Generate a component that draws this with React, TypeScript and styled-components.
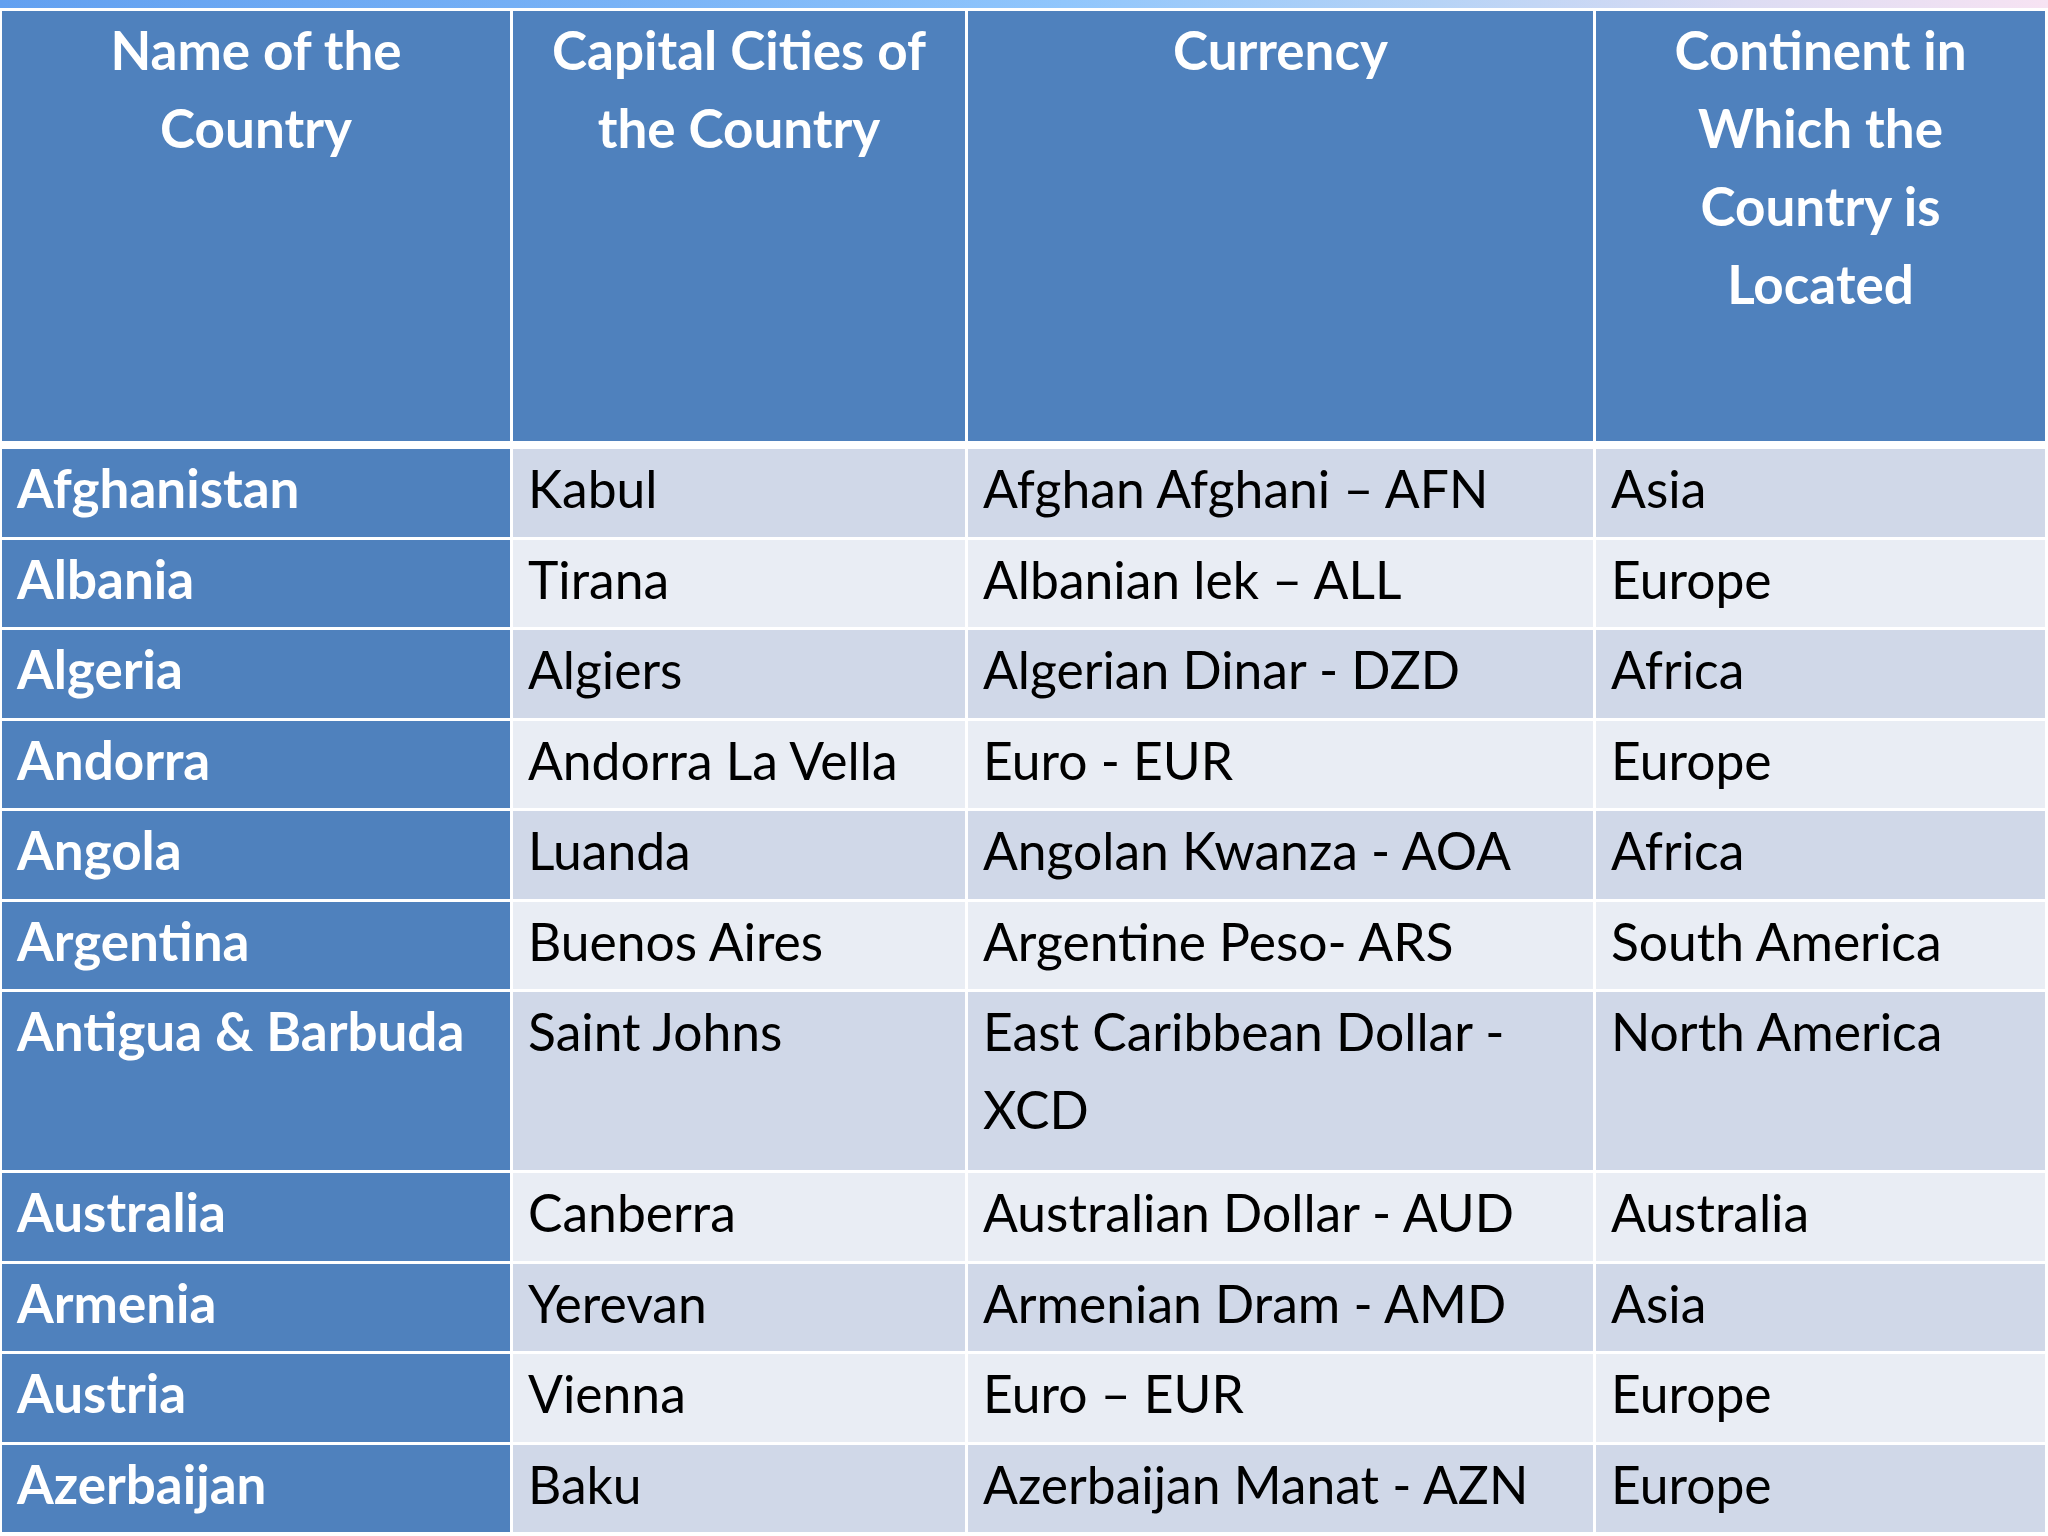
import React from "react";
import styled, { createGlobalStyle } from "styled-components";

const GlobalStyle = createGlobalStyle`
  html, body {
    margin: 0;
    padding: 0;
    background: #ffffff;
  }
  body {
    width: 2048px;
    height: 1536px;
    overflow: hidden;
    font-family: Lato, "Open Sans", "Liberation Sans", sans-serif;
  }
`;

const Page = styled.div`
  width: 2048px;
  height: 1536px;
  background: #ffffff;
  display: flex;
  flex-direction: column;
`;

const TopStripe = styled.div`
  height: 8px;
  flex: none;
  background: linear-gradient(
    90deg,
    #62a0f0 0%,
    #78b2f6 30%,
    #90c6fc 52%,
    #b6d3f6 70%,
    #dcdcf3 85%,
    #f7e3f3 100%
  );
`;

const Table = styled.div`
  display: grid;
  grid-template-columns: 508px 452px 625px 449px;
  column-gap: 3px;
  row-gap: 3px;
  margin: 3px 3px 0 2px;
`;

const HeaderCell = styled.div`
  height: 430px;
  margin-bottom: 5px;
  background: #4f81bd;
  color: #ffffff;
  font-weight: 700;
  font-size: 53px;
  line-height: 78px;
  text-align: center;
  padding: 0 8px;
  box-sizing: border-box;
`;

const BodyCell = styled.div<{ $shade: "dark" | "light"; $lines: number }>`
  height: ${(p) => p.$lines * 87.5 + (p.$lines - 1) * 3}px;
  background: ${(p) => (p.$shade === "dark" ? "#d0d8e8" : "#e9edf4")};
  color: #000000;
  font-size: 51.6px;
  line-height: 78px;
  padding: 0 0 0 15px;
  box-sizing: border-box;
  white-space: nowrap;
`;

const CountryCell = styled.div<{ $lines: number }>`
  height: ${(p) => p.$lines * 87.5 + (p.$lines - 1) * 3}px;
  background: #4f81bd;
  color: #ffffff;
  font-weight: 700;
  font-size: 53px;
  line-height: 78px;
  padding: 0 0 0 15px;
  box-sizing: border-box;
  white-space: nowrap;
`;

type Row = {
  country: string;
  capital: string;
  currency: string[];
  continent: string;
};

const headers: string[][] = [
  ["Name of the", "Country"],
  ["Capital Cities of", "the Country"],
  ["Currency"],
  ["Continent in", "Which the", "Country is", "Located"],
];

const rows: Row[] = [
  { country: "Afghanistan", capital: "Kabul", currency: ["Afghan Afghani \u2013 AFN"], continent: "Asia" },
  { country: "Albania", capital: "Tirana", currency: ["Albanian lek \u2013 ALL"], continent: "Europe" },
  { country: "Algeria", capital: "Algiers", currency: ["Algerian Dinar - DZD"], continent: "Africa" },
  { country: "Andorra", capital: "Andorra La Vella", currency: ["Euro - EUR"], continent: "Europe" },
  { country: "Angola", capital: "Luanda", currency: ["Angolan Kwanza - AOA"], continent: "Africa" },
  { country: "Argentina", capital: "Buenos Aires", currency: ["Argentine Peso- ARS"], continent: "South America" },
  { country: "Antigua & Barbuda", capital: "Saint Johns", currency: ["East Caribbean Dollar -", "XCD"], continent: "North America" },
  { country: "Australia", capital: "Canberra", currency: ["Australian Dollar - AUD"], continent: "Australia" },
  { country: "Armenia", capital: "Yerevan", currency: ["Armenian Dram - AMD"], continent: "Asia" },
  { country: "Austria", capital: "Vienna", currency: ["Euro \u2013 EUR"], continent: "Europe" },
  { country: "Azerbaijan", capital: "Baku", currency: ["Azerbaijan Manat - AZN"], continent: "Europe" },
];

const Lines: React.FC<{ lines: string[] }> = ({ lines }) => (
  <>
    {lines.map((l, i) => (
      <React.Fragment key={i}>
        {i > 0 && <br />}
        {l}
      </React.Fragment>
    ))}
  </>
);

export default function App() {
  return (
    <>
      <GlobalStyle />
      <Page>
        <TopStripe />
        <Table>
          {headers.map((h, i) => (
            <HeaderCell key={i}>
              <Lines lines={h} />
            </HeaderCell>
          ))}
          {rows.map((r, i) => {
            const shade = i % 2 === 0 ? "dark" : "light";
            const lines = r.currency.length;
            return (
              <React.Fragment key={r.country}>
                <CountryCell $lines={lines}>{r.country}</CountryCell>
                <BodyCell $shade={shade} $lines={lines}>{r.capital}</BodyCell>
                <BodyCell $shade={shade} $lines={lines}>
                  <Lines lines={r.currency} />
                </BodyCell>
                <BodyCell $shade={shade} $lines={lines}>{r.continent}</BodyCell>
              </React.Fragment>
            );
          })}
        </Table>
      </Page>
    </>
  );
}
